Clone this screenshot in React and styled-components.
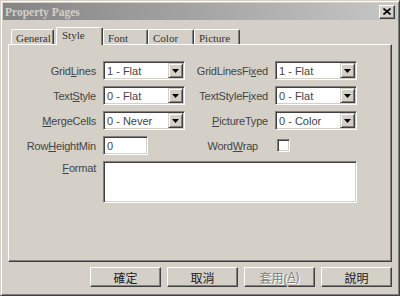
import styled, { createGlobalStyle } from "styled-components";

const GlobalStyle = createGlobalStyle`
  html, body {
    margin: 0;
    padding: 0;
    background: #d4d0c8;
  }
  body {
    font-family: "Liberation Sans", Arial, sans-serif;
  }
`;

const Window = styled.div`
  box-sizing: border-box;
  width: 400px;
  height: 296px;
  display: flex;
  flex-direction: column;
  padding: 2px;
  background: #d4d0c8;
  border: 1px solid;
  border-color: #d4d0c8 #404040 #404040 #d4d0c8;
  box-shadow: inset 1px 1px #fff, inset -1px -1px #808080;
`;

const TitleBar = styled.div`
  height: 17px;
  display: flex;
  align-items: center;
  justify-content: space-between;
  padding: 0 2px 0 2px;
  background: linear-gradient(to right, #848484, #c6c6c6);
`;

const Title = styled.span`
  font-family: "Liberation Serif", "Times New Roman", serif;
  font-weight: bold;
  font-size: 11.5px;
  color: #d4d0c8;
`;

const CloseButton = styled.div`
  box-sizing: border-box;
  width: 16px;
  height: 14px;
  display: flex;
  align-items: center;
  justify-content: center;
  background: #d4d0c8;
  border: 1px solid;
  border-color: #fff #404040 #404040 #fff;
  box-shadow: inset -1px -1px #808080;
`;

const Body = styled.div`
  display: flex;
  flex-direction: column;
  padding: 0 5px;
`;

const TabRow = styled.div`
  display: flex;
  align-items: flex-end;
  height: 17px;
  margin-top: 7px;
  padding-left: 3px;
`;

const Tab = styled.div`
  box-sizing: border-box;
  width: ${(p) => p.$w}px;
  height: ${(p) => (p.$active ? 18 : 15)}px;
  margin-left: ${(p) => p.$ml || 0}px;
  margin-bottom: ${(p) => (p.$active ? -1 : 0)}px;
  padding: ${(p) => (p.$active ? "1px 0 0 5px" : "2px 0 0 4px")};
  background: #d4d0c8;
  border-top: 1px solid #fff;
  border-left: 1px solid #fff;
  border-right: 1px solid #404040;
  border-radius: 2px 2px 0 0;
  box-shadow: inset -1px 0 #808080;
  font-family: "Liberation Serif", "Times New Roman", serif;
  font-size: 11px;
  line-height: 13px;
  color: #333;
  white-space: nowrap;
  position: ${(p) => (p.$active ? "relative" : "static")};
  z-index: ${(p) => (p.$active ? 1 : "auto")};
`;

const Panel = styled.div`
  box-sizing: border-box;
  height: 218px;
  padding-top: 16px;
  border: 1px solid;
  border-color: #fff #404040 #404040 #fff;
  box-shadow: inset -1px -1px #808080;
`;

const FormGrid = styled.div`
  display: grid;
  grid-template-columns: 87px 82px 76px 82px;
  grid-template-rows: repeat(4, 19px) 42px;
  column-gap: 7px;
  row-gap: 6px;
`;

const Label = styled.div`
  align-self: ${(p) => (p.$top ? "start" : "center")};
  padding-top: ${(p) => (p.$top ? 1 : 0)}px;
  padding-right: ${(p) => p.$pr || 0}px;
  text-align: right;
  white-space: nowrap;
  font-size: 11px;
  letter-spacing: -0.2px;
  color: #444;
`;

const Mnemonic = styled.u`
  text-decoration: underline;
  text-underline-offset: 1px;
`;

const sunken = `
  box-sizing: border-box;
  background: #fff;
  border: 1px solid;
  border-color: #808080 #fff #fff #808080;
  box-shadow: inset 1px 1px #404040, inset -1px -1px #d4d0c8;
`;

const Combo = styled.div`
  ${sunken}
  height: 19px;
  display: flex;
  align-items: center;
  padding: 0 1px 0 3px;
  font-size: 11px;
  color: #444;
`;

const DropButton = styled.div`
  box-sizing: border-box;
  width: 15px;
  height: 15px;
  margin-left: auto;
  display: flex;
  align-items: center;
  justify-content: center;
  background: #d4d0c8;
  border: 1px solid;
  border-color: #d4d0c8 #404040 #404040 #d4d0c8;
  box-shadow: inset 1px 1px #fff, inset -1px -1px #808080;
`;

const TextBox = styled.div`
  ${sunken}
  width: 45px;
  height: 19px;
  display: flex;
  align-items: center;
  padding-left: 3px;
  font-size: 11px;
  color: #444;
`;

const CheckBox = styled.div`
  ${sunken}
  width: 13px;
  height: 13px;
  align-self: center;
  margin-left: 2px;
`;

const TextArea = styled.div`
  ${sunken}
  grid-column: 2 / 5;
  height: 42px;
`;

const ButtonRow = styled.div`
  display: flex;
  justify-content: flex-end;
  gap: 6px;
  margin-top: 5px;
`;

const Button = styled.div`
  box-sizing: border-box;
  width: 71px;
  height: 20px;
  display: flex;
  align-items: center;
  justify-content: center;
  background: #d4d0c8;
  border: 1px solid;
  border-color: #fff #404040 #404040 #fff;
  box-shadow: inset -1px -1px #808080;
  font-family: "Liberation Sans", "Noto Sans CJK TC", sans-serif;
  font-size: 12px;
  color: ${(p) => (p.$disabled ? "#808080" : "#222")};
  text-shadow: ${(p) => (p.$disabled ? "1px 1px #fff" : "none")};
`;

const Arrow = () => (
  <svg width="7" height="4" viewBox="0 0 7 4">
    <polygon points="0,0 7,0 3.5,4" fill="#000" />
  </svg>
);

const CloseIcon = () => (
  <svg width="8" height="7" viewBox="0 0 8 7">
    <path d="M0.5 0.5 L7.5 6.5 M7.5 0.5 L0.5 6.5" stroke="#000" strokeWidth="1.6" />
  </svg>
);

const Select = ({ value }) => (
  <Combo>
    {value}
    <DropButton>
      <Arrow />
    </DropButton>
  </Combo>
);

const tabs = [
  { name: "General", w: 43 },
  { name: "Style", w: 47, ml: 2, active: true },
  { name: "Font", w: 45 },
  { name: "Color", w: 46 },
  { name: "Picture", w: 46 },
];

export default function App() {
  return (
    <>
      <GlobalStyle />
      <Window>
        <TitleBar>
          <Title>Property Pages</Title>
          <CloseButton>
            <CloseIcon />
          </CloseButton>
        </TitleBar>
        <Body>
          <TabRow>
            {tabs.map((t) => (
              <Tab key={t.name} $w={t.w} $ml={t.ml} $active={t.active}>
                {t.name}
              </Tab>
            ))}
          </TabRow>
          <Panel>
            <FormGrid>
              <Label>
                Grid<Mnemonic>L</Mnemonic>ines
              </Label>
              <Select value="1 - Flat" />
              <Label>
                GridLinesFi<Mnemonic>x</Mnemonic>ed
              </Label>
              <Select value="1 - Flat" />

              <Label>
                Text<Mnemonic>S</Mnemonic>tyle
              </Label>
              <Select value="0 - Flat" />
              <Label>
                TextStyleF<Mnemonic>i</Mnemonic>xed
              </Label>
              <Select value="0 - Flat" />

              <Label>
                <Mnemonic>M</Mnemonic>ergeCells
              </Label>
              <Select value="0 - Never" />
              <Label>
                <Mnemonic>P</Mnemonic>ictureType
              </Label>
              <Select value="0 - Color" />

              <Label>
                Row<Mnemonic>H</Mnemonic>eightMin
              </Label>
              <TextBox>0</TextBox>
              <Label $pr={10}>
                Word<Mnemonic>W</Mnemonic>rap
              </Label>
              <CheckBox />

              <Label $top>
                <Mnemonic>F</Mnemonic>ormat
              </Label>
              <TextArea />
            </FormGrid>
          </Panel>
          <ButtonRow>
            <Button>確定</Button>
            <Button>取消</Button>
            <Button $disabled>
              套用(<Mnemonic>A</Mnemonic>)
            </Button>
            <Button>說明</Button>
          </ButtonRow>
        </Body>
      </Window>
    </>
  );
}
